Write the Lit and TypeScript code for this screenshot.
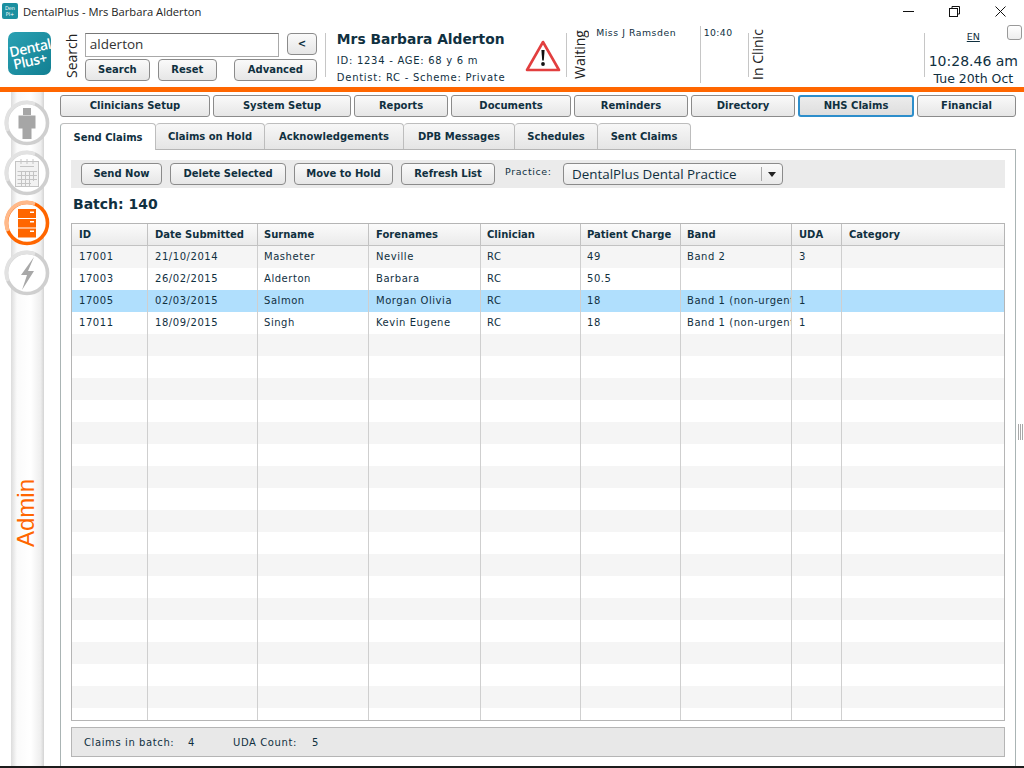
import { LitElement, html, css, svg } from "lit";
import { customElement } from "lit/decorators.js";

const NAV = [
  ["Clinicians Setup", 150], ["System Setup", 138], ["Reports", 94], ["Documents", 120],
  ["Reminders", 114], ["Directory", 104], ["NHS Claims", 116], ["Financial", 99],
] as const;
const TABS = [
  ["Send Claims", 96], ["Claims on Hold", 109], ["Acknowledgements", 139],
  ["DPB Messages", 111], ["Schedules", 83], ["Sent Claims", 93],
] as const;
const COLS = ["ID", "Date Submitted", "Surname", "Forenames", "Clinician", "Patient Charge", "Band", "UDA", "Category"];
const ROWS = [
  ["17001", "21/10/2014", "Masheter", "Neville", "RC", "49", "Band 2", "3", ""],
  ["17003", "26/02/2015", "Alderton", "Barbara", "RC", "50.5", "", "", ""],
  ["17005", "02/03/2015", "Salmon", "Morgan Olivia", "RC", "18", "Band 1 (non-urgent)", "1", ""],
  ["17011", "18/09/2015", "Singh", "Kevin Eugene", "RC", "18", "Band 1 (non-urgent)", "1", ""],
];

function ring(active: boolean, glyph: unknown) {
  const dark = active ? "#ff6600" : "#cfcfcf";
  const light = active ? "#ffb98a" : "#e2e2e2";
  return html`<svg class="ring" width="48" height="48" viewBox="0 0 48 48">
    <circle cx="24" cy="24" r="20.5" fill="#fff" stroke="${dark}" stroke-width="3.6"></circle>
    <path d="M5 32 A20.5 20.5 0 0 1 32 5" fill="none" stroke="${light}" stroke-width="3.6"></path>
    ${glyph}
  </svg>`;
}
const personIcon = svg`<g fill="#a6a6a6"><rect x="20" y="9" width="8" height="7"></rect><rect x="15.5" y="16.5" width="17" height="13"></rect><rect x="19.5" y="29" width="9" height="11"></rect></g>`;
const calendarIcon = svg`<g fill="#f2f2f2" stroke="#c4c4c4" stroke-width="1"><rect x="12.5" y="12.5" width="23" height="25"></rect><path fill="none" d="M14.5 22.5H34M14.5 26.5H34M14.5 30.5H34M14.5 34.5H28M18.5 22V37M22.5 22V37M26.5 22V37M30.5 22V32M18 10V15M24 10V15M30 10V15M17 17.5H31"></path></g>`;
const cabinetIcon = svg`<g fill="#ff6600"><rect x="15" y="10" width="18" height="9"></rect><rect x="15" y="20" width="18" height="8.5"></rect><rect x="15" y="29.5" width="18" height="9"></rect></g><g fill="#fff"><rect x="27" y="12.5" width="4" height="1.5"></rect><rect x="27" y="22" width="4" height="1.5"></rect><rect x="27" y="31.5" width="4" height="1.5"></rect></g>`;
const boltIcon = svg`<path fill="#a8a8a8" d="M31 8 L18 26 L24 26 L19 41 L31 22 L25 22 Z"></path>`;

@customElement("app-root")
export class AppRoot extends LitElement {
  static styles = css`
    :host { display: block; width: 1024px; height: 768px; overflow: hidden; background: #fff; color: #10303f;
      font-family: "DejaVu Sans", Verdana, sans-serif; font-size: 10px; }
    * { box-sizing: border-box; }
    .titlebar { height: 25px; display: flex; align-items: center; padding: 0 0 3px 2px; }
    .app-ico { width: 16px; height: 16px; border-radius: 2px; background: #1b8fa0; color: #fff; font-size: 5px; line-height: 6px;
      text-align: center; padding-top: 2px; }
    .title { margin-left: 5px; font: 11.2px "Open Sans", sans-serif; color: #222; flex: 1; }
    .winbtns { display: flex; align-items: center; margin-right: 18px; gap: 35px; }
    .winbtns svg { display: block; }
    .head { height: 62px; display: flex; position: relative; }
    .logo { width: 43px; height: 43px; margin: 7px 11px 0 8px; border-radius: 7px; background: linear-gradient(135deg, #2aa1b3, #127f92);
      color: #fff; font: 600 14px/13px "Open Sans", sans-serif; display: flex; flex-direction: column; justify-content: center;
      align-items: center; }
    .logo span { display: block; transform: rotate(-12deg); letter-spacing: -0.5px; }
    .vert { writing-mode: vertical-rl; transform: rotate(180deg); font: 14px "Open Sans", sans-serif; color: #222; text-align: left; white-space: nowrap; flex: none; }
    .search-lbl { width: 14px; height: 46px; margin: 7px 9px 0 0; }
    .search { width: 232px; display: grid; grid-template-columns: 194px 8px 30px; grid-template-rows: 24px 22px; row-gap: 2px; padding-top: 8px; }
    .input { border: 1px solid #a9a9a9; border-top-color: #777; height: 24px; padding: 0 4px; font: 13.5px/21px "Open Sans", sans-serif; color: #333; }
    .lt { grid-column: 3; height: 22px; }
    .search-btns { grid-column: 1 / 4; display: flex; gap: 8px; }
    .sb1 { width: 65px; }
    .sb2 { width: 59px; }
    .sb3 { width: 83px; margin-left: 9px; }
    .btn { display: flex; align-items: center; justify-content: center; height: 22px; border: 1px solid #8b8b8b; border-radius: 4px; padding-bottom: 1px;
      background: linear-gradient(#fafafa, #e6e6e6); font-weight: 700; color: #10303f; font-size: 10px; white-space: nowrap; }
    .dv { width: 1px; background: #c6c6c6; height: 44px; margin-top: 8px; flex: none; }
    .dv1 { margin-left: 8px; }
    .patient { width: 189px; padding: 3px 0 0 11px; line-height: 17px; letter-spacing: .72px; }
    .patient h1 { margin: 0 0 2px; font-size: 13.8px; line-height: 22px; font-weight: 700; color: #10303f; white-space: nowrap; letter-spacing: 0; }
    .patient div { white-space: nowrap; font-size: 10px; }
    .warn { width: 52px; padding: 14px 0 0 11px; }
    .warn svg { display: block; }
    .waiting { width: 133px; display: flex; position: relative; }
    .waiting .vert { height: 48px; margin: 6px 0 0 3px; width: 14px; }
    .wname { margin: 2px 0 0 12px; font-size: 9.3px; white-space: nowrap; line-height: 12px; letter-spacing: .55px; }
    .slot { width: 48px; border-left: 1px solid #c6c6c6; height: 57px; margin-top: 1px; font-size: 9.3px; padding: 1px 0 0 3px; line-height: 12px; letter-spacing: .4px; flex: none; }
    .clinic { width: 175px; display: flex; flex: none; }
    .clinic .vert { height: 50px; margin: 5px 0 0 -1px; width: 14px; }
    .clock { flex: 1; position: relative; text-align: center; padding-left: 4px; margin-right: 6px; }
    .en { display: block; font-size: 9.5px; text-decoration: underline; margin: 6px 0 0 0; line-height: 12px; text-align: center; }
    .time { font: 14px/20px "DejaVu Sans", sans-serif; margin-top: 8px; white-space: nowrap; }
    .date { font: 12.5px/16px "DejaVu Sans", sans-serif; white-space: nowrap; }
    .check { position: absolute; right: 2px; top: 0; width: 15px; height: 15px; border: 1px solid #999; border-radius: 3px; background: linear-gradient(#fff, #eee); }
    .orange { height: 5px; background: #ff6600; }
    .body { display: flex; height: 674px; }
    .side { width: 60px; flex: none; }
    .strip { width: 33px; height: 100%; margin-left: 11px; background: linear-gradient(90deg, #dcdcdc, #fafafa 18%, #fff 60%, #eeeeee 90%, #d4d4d4);
      display: flex; flex-direction: column; align-items: center; }
    .ring { display: block; flex: none; margin: 0 0 2px -1px; }
    .ring:first-child { margin-top: 7px; }
    .admin { writing-mode: vertical-rl; transform: rotate(180deg); color: #ff6600; font: 24px "Liberation Sans", sans-serif; margin: 180px 4px 0 0; line-height: 26px; }
    .main { width: 964px; padding-top: 3px; }
    .nav { display: flex; gap: 3px; height: 22px; }
    .nav .item { display: flex; align-items: center; justify-content: center; border: 1px solid #8b8b8b; border-radius: 3px; padding-bottom: 1px;
      background: linear-gradient(#fafafa, #e6e6e6); font-weight: 700; color: #10303f; }
    .nav .on { border: 2px solid #2d8ecb; background: linear-gradient(#ececec, #dedede); }
    .tabs { display: flex; margin-top: 6px; height: 27px; width: 956px; border-bottom: 1px solid #b5b5b5; }
    .tab { height: 26px; display: flex; align-items: center; justify-content: center; border: 1px solid #bdbdbd; border-left: none; border-bottom: none;
      border-radius: 4px 4px 0 0; background: linear-gradient(#f7f7f7, #e5e5e5); font-weight: 700; }
    .tab.on { height: 27px; background: #fff; border-left: 1px solid #aab4b4; border-right: 1px solid #bdbdbd; }
    .panel { width: 956px; height: 616px; border-left: 1px solid #aab4b4; border-right: 1px solid #aab4b4; padding: 10px 10px 0; position: relative; }
    .toolbar { height: 28px; width: 934px; background: #ebebeb; display: flex; align-items: center; padding-left: 10px; gap: 8px; }
    .prac { margin: -5px 0 0 2px; width: 50px; font-size: 9.5px; letter-spacing: .6px; }
    .select { width: 220px; height: 22px; border: 1px solid #8b8b8b; border-radius: 4px; background: linear-gradient(#fafafa, #e9e9e9); display: flex; align-items: center;
      font: 13.4px "Open Sans", sans-serif; color: #10303f; padding-left: 8px; }
    .select .txt { flex: 1; }
    .select .arr { width: 21px; border-left: 1px solid #aaa; height: 14px; display: flex; align-items: center; justify-content: center; }
    .batch { margin: 8px 0 0 2px; font-size: 14px; line-height: 17px; font-weight: 700; height: 27px; }
    .grid { width: 934px; height: 498px; border: 1px solid #b5b5b5; overflow: hidden; position: relative; }
    .row { display: grid; grid-template-columns: 76px 110px 111px 112px 100px 100px 111px 50px 1fr; height: 22px; }
    .row.hd { height: 22px; background: linear-gradient(#fbfbfb, #eaeaea); border-bottom: 1px solid #c2c2c2; font-weight: 700; }
    .cell { border-right: 1px solid #cfcfcf; padding: 0 0 0 7px; line-height: 21px; white-space: nowrap; overflow: hidden; font-size: 10px; letter-spacing: .55px; min-width: 0; }
    .cell:nth-child(3), .cell:nth-child(5), .cell:nth-child(6), .cell:nth-child(7) { padding-left: 6px; }
    .hd .cell { border-right-color: #c2c2c2; line-height: 21px; letter-spacing: 0; }
    .cell:last-child { border-right: none; }
    .alt { background: #f5f5f5; }
    .sel { background: #b0dffd; }
    .footer { width: 934px; height: 30px; margin-top: 6px; background: #e8e8e8; border: 1px solid #b5b5b5; display: flex; align-items: center; padding-left: 12px; font-size: 10px; letter-spacing: .6px; }
    .f1 { width: 104px; }
    .f2 { width: 45px; }
    .f3 { width: 79px; }
    .grip { position: absolute; left: 1018px; top: 424px; width: 5px; height: 16px; background: repeating-linear-gradient(90deg, #a8a8a8 0 1px, #fff 1px 2px); }
    .bottom { height: 2px; background: #1c1c1c; }
    .wrap { position: relative; }
  `;

  render() {
    return html`<div class="wrap">
      <div class="titlebar">
        <div class="app-ico">Den Pl+</div>
        <div class="title">DentalPlus - Mrs Barbara Alderton</div>
        <div class="winbtns">
          <svg width="11" height="11" viewBox="0 0 11 11"><path d="M0 5.5H11" stroke="#111"></path></svg>
          <svg width="11" height="11" viewBox="0 0 11 11" fill="none" stroke="#111"><rect x=".5" y="2.5" width="8" height="8"></rect><path d="M3 2.5V.5H10.5V8H8.5"></path></svg>
          <svg width="11" height="11" viewBox="0 0 11 11" stroke="#111"><path d="M.5 .5L10.5 10.5M10.5 .5L.5 10.5"></path></svg>
        </div>
      </div>
      <div class="head">
        <div class="logo"><span>Dental</span><span>Plus+</span></div>
        <div class="vert search-lbl">Search</div>
        <div class="search">
          <div class="input">alderton</div>
          <div class="btn lt">&lt;</div>
          <div class="search-btns">
            <div class="btn sb1">Search</div><div class="btn sb2">Reset</div><div class="btn sb3">Advanced</div>
          </div>
        </div>
        <div class="dv dv1"></div>
        <div class="patient">
          <h1>Mrs Barbara Alderton</h1>
          <div>ID: 1234 - AGE: 68 y 6 m</div>
          <div>Dentist: RC - Scheme: Private</div>
        </div>
        <div class="warn">
          <svg width="36" height="34" viewBox="0 0 36 34"><path d="M18 3 L34 31 H2 Z" fill="#fff" stroke="#e23f3f" stroke-width="2.6" stroke-linejoin="round"></path><path d="M16.4 11 H19.6 L18.8 21.5 H17.2 Z" fill="#111"></path><circle cx="18" cy="25" r="1.9" fill="#111"></circle></svg>
        </div>
        <div class="dv"></div>
        <div class="waiting">
          <div class="vert">Waiting</div>
          <div class="wname">Miss J Ramsden</div>
        </div>
        <div class="slot">10:40</div>
        <div class="dv"></div>
        <div class="clinic"><div class="vert">In Clinic</div></div>
        <div class="dv"></div>
        <div class="clock">
          <span class="en">EN</span>
          <div class="time">10:28.46 am</div>
          <div class="date">Tue 20th Oct</div>
        </div>
        <div class="check"></div>
      </div>
      <div class="orange"></div>
      <div class="body">
        <div class="side"><div class="strip">
          ${ring(false, personIcon)}${ring(false, calendarIcon)}${ring(true, cabinetIcon)}${ring(false, boltIcon)}
          <div class="admin">Admin</div>
        </div></div>
        <div class="main">
          <div class="nav">
            ${NAV.map(([t, w]) => html`<div class="item ${t === "NHS Claims" ? "on" : ""}" style="width:${w}px">${t}</div>`)}
          </div>
          <div class="tabs">
            ${TABS.map(([t, w], i) => html`<div class="tab ${i === 0 ? "on" : ""}" style="width:${w}px">${t}</div>`)}
          </div>
          <div class="panel">
            <div class="toolbar">
              <div class="btn" style="width:81px">Send Now</div>
              <div class="btn" style="width:116px">Delete Selected</div>
              <div class="btn" style="width:99px">Move to Hold</div>
              <div class="btn" style="width:94px">Refresh List</div>
              <div class="prac">Practice:</div>
              <div class="select"><span class="txt">DentalPlus Dental Practice</span><span class="arr"><svg width="8" height="5" viewBox="0 0 8 5"><path d="M0 0H8L4 5Z" fill="#222"></path></svg></span></div>
            </div>
            <div class="batch">Batch: 140</div>
            <div class="grid">
              <div class="row hd">${COLS.map((c) => html`<div class="cell">${c}</div>`)}</div>
              ${Array.from({ length: 22 }, (_, i) => {
                const r = ROWS[i] ?? Array(9).fill("");
                const cls = i === 2 ? "sel" : i % 2 === 0 ? "alt" : "";
                return html`<div class="row ${cls}">${r.map((c) => html`<div class="cell">${c}</div>`)}</div>`;
              })}
            </div>
            <div class="footer">
              <span class="f1">Claims in batch:</span><span class="f2">4</span>
              <span class="f3">UDA Count:</span><span>5</span>
            </div>
          </div>
        </div>
      </div>
      <div class="bottom"></div>
      <div class="grip"></div>
    </div>`;
  }
}
